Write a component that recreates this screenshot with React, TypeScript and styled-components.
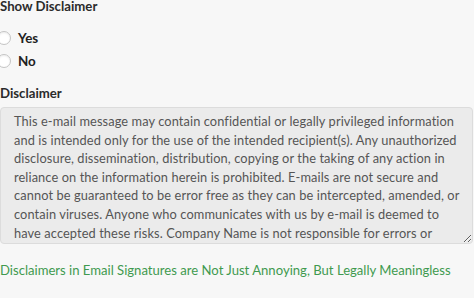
import React from "react";
import styled, { createGlobalStyle } from "styled-components";

const disclaimer =
  "This e-mail message may contain confidential or legally privileged information and is intended only for the use of the intended recipient(s). Any unauthorized disclosure, dissemination, distribution, copying or the taking of any action in reliance on the information herein is prohibited. E-mails are not secure and cannot be guaranteed to be error free as they can be intercepted, amended, or contain viruses. Anyone who communicates with us by e-mail is deemed to have accepted these risks. Company Name is not responsible for errors or omissions in this message and denies any responsibility for any damage arising from the use of e-mail.";

export default () => {
  return (
    <>
      <GlobalStyle />
      <Page>
        <Label>Show Disclaimer</Label>
        <Options>
          <Option>
            <Radio />
            Yes
          </Option>
          <Option>
            <Radio />
            No
          </Option>
        </Options>
        <Label>Disclaimer</Label>
        <TextArea defaultValue={disclaimer} />
        <Link href="#">
          Disclaimers in Email Signatures are Not Just Annoying, But Legally
          Meaningless
        </Link>
      </Page>
    </>
  );
};

const GlobalStyle = createGlobalStyle`
  html, body {
    margin: 0;
    background: #f7f7f7;
  }
`;

const Page = styled.div`
  width: 474px;
  height: 298px;
  overflow: hidden;
  font-family: Lato, "Open Sans", sans-serif;
  display: flex;
  flex-direction: column;
`;

const Label = styled.div`
  font-size: 13.2px;
  font-weight: 700;
  color: #2b2b2b;
  line-height: 16px;
  white-space: nowrap;
  &:first-child {
    margin-top: -2px;
  }
`;

const Options = styled.div`
  display: flex;
  flex-direction: column;
  gap: 7px;
  margin: 16px 0 16px;
`;

const Option = styled.label`
  display: flex;
  align-items: center;
  gap: 7px;
  font-size: 13.4px;
  font-weight: 700;
  color: #222;
  line-height: 16px;
  margin-left: -3px;
`;

const Radio = styled.span`
  width: 12px;
  height: 12px;
  border-radius: 50%;
  border: 1px solid #c4c4c4;
  background: #fff;
  box-shadow: inset 0 1px 2px rgba(0, 0, 0, 0.08);
  flex-shrink: 0;
`;

const TextArea = styled.textarea`
  margin-top: 6px;
  width: 473px;
  height: 137px;
  box-sizing: border-box;
  padding: 4px 7px 4px 13px;
  border: 1px solid #dcdcdc;
  border-radius: 4px;
  background: #ebebeb;
  color: #555;
  font-family: Lato, "Open Sans", sans-serif;
  font-size: 12.8px;
  letter-spacing: 0.1px;
  line-height: 18.6px;
  overflow: hidden;
  resize: both;
  outline: none;
`;

const Link = styled.a`
  margin-top: 18px;
  font-size: 13.1px;
  line-height: 16px;
  color: #3f9a4f;
  text-decoration: none;
  white-space: nowrap;
`;
